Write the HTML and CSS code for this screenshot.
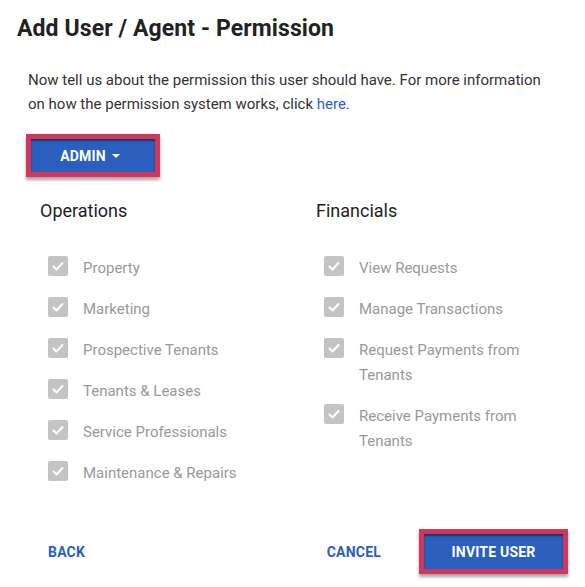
FILE: index.html
```html
<!DOCTYPE html>
<html>
<head>
<meta charset="utf-8">
<link rel="stylesheet" href="styles.css">
</head>
<body>
<div class="modal">
  <h1 class="title">Add User / Agent - Permission</h1>
  <div class="body">
    <p class="intro">Now tell us about the permission this user should have. For more information on how the permission system works, click <a class="link" href="#">here</a>.</p>
    <div class="role-wrap">
      <span class="highlight">
        <button class="btn-primary btn-role">ADMIN <span class="caret"></span></button>
      </span>
    </div>
    <div class="columns">
      <div class="col">
        <h2 class="col-title">Operations</h2>
        <ul class="perm-list">
          <li class="perm"><span class="check"><svg viewBox="0 0 20 20"><path d="M5.5 10.5l3 3 6-6.5" /></svg></span><span class="label">Property</span></li>
          <li class="perm"><span class="check"><svg viewBox="0 0 20 20"><path d="M5.5 10.5l3 3 6-6.5" /></svg></span><span class="label">Marketing</span></li>
          <li class="perm"><span class="check"><svg viewBox="0 0 20 20"><path d="M5.5 10.5l3 3 6-6.5" /></svg></span><span class="label">Prospective Tenants</span></li>
          <li class="perm"><span class="check"><svg viewBox="0 0 20 20"><path d="M5.5 10.5l3 3 6-6.5" /></svg></span><span class="label">Tenants &amp; Leases</span></li>
          <li class="perm"><span class="check"><svg viewBox="0 0 20 20"><path d="M5.5 10.5l3 3 6-6.5" /></svg></span><span class="label">Service Professionals</span></li>
          <li class="perm"><span class="check"><svg viewBox="0 0 20 20"><path d="M5.5 10.5l3 3 6-6.5" /></svg></span><span class="label">Maintenance &amp; Repairs</span></li>
        </ul>
      </div>
      <div class="col">
        <h2 class="col-title">Financials</h2>
        <ul class="perm-list">
          <li class="perm"><span class="check"><svg viewBox="0 0 20 20"><path d="M5.5 10.5l3 3 6-6.5" /></svg></span><span class="label">View Requests</span></li>
          <li class="perm"><span class="check"><svg viewBox="0 0 20 20"><path d="M5.5 10.5l3 3 6-6.5" /></svg></span><span class="label">Manage Transactions</span></li>
          <li class="perm"><span class="check"><svg viewBox="0 0 20 20"><path d="M5.5 10.5l3 3 6-6.5" /></svg></span><span class="label">Request Payments from Tenants</span></li>
          <li class="perm"><span class="check"><svg viewBox="0 0 20 20"><path d="M5.5 10.5l3 3 6-6.5" /></svg></span><span class="label">Receive Payments from Tenants</span></li>
        </ul>
      </div>
    </div>
  </div>
  <div class="footer">
    <button class="btn-flat">BACK</button>
    <div class="footer-right">
      <button class="btn-flat">CANCEL</button>
      <span class="highlight">
        <button class="btn-primary btn-invite">INVITE USER</button>
      </span>
    </div>
  </div>
</div>
</body>
</html>
```

FILE: styles.css
```css
* { box-sizing: border-box; }
html, body { margin: 0; padding: 0; background: #fff; }
body {
  font-family: Roboto, "Noto Sans", sans-serif;
  color: #333;
  width: 585px;
  height: 587px;
  overflow: hidden;
}
.modal { padding: 15px 0 0; }
.title {
  margin: 0;
  padding: 0 17px;
  font-size: 23px;
  line-height: 28px;
  font-weight: 700;
  color: #222;
  letter-spacing: 0.1px;
}
.body { padding: 0 28px; }
.intro {
  margin: 25px 0 0;
  max-width: 522px;
  font-size: 15px;
  line-height: 24px;
  color: #333;
}
.link { color: #2a62c9; text-decoration: none; }
.role-wrap { margin: 18px 0 0 -2px; display: flex; }
.highlight {
  display: inline-flex;
  border: 5px solid #d3365c;
  box-shadow: 0 3px 3px rgba(0,0,0,0.35);
}
.btn-primary {
  border: 0;
  margin: 0;
  background: #2a5fbd;
  color: #fff;
  font-family: inherit;
  font-weight: 700;
  font-size: 14px;
  letter-spacing: 0.2px;
  box-shadow: inset 0 2px 2px rgba(0,0,0,0.45);
  display: flex;
  align-items: center;
  justify-content: center;
  gap: 6px;
}
.btn-role { width: 124px; height: 33px; padding: 0 6px 0 0; }
.caret {
  width: 0; height: 0;
  border-left: 4px solid transparent;
  border-right: 4px solid transparent;
  border-top: 4px solid #fff;
  margin-top: 1px;
}
.columns {
  display: grid;
  grid-template-columns: 276px 1fr;
  margin: 22px 0 0 12px;
}
.col-title {
  margin: 0;
  font-size: 18px;
  line-height: 24px;
  font-weight: 400;
  color: #222;
}
.perm-list { list-style: none; margin: 33px 0 0; padding: 0 0 0 8px; }
.perm {
  display: flex;
  align-items: flex-start;
  gap: 15px;
  margin-bottom: 16px;
  font-size: 15px;
  line-height: 25px;
  color: #999;
}
.label { max-width: 180px; }
.check {
  flex: none;
  width: 20px;
  height: 20px;
  border-radius: 2px;
  background: #c4c4c4;
  display: flex;
}
.check svg { width: 20px; height: 20px; fill: none; stroke: #fff; stroke-width: 2; stroke-linecap: round; stroke-linejoin: round; }
.footer {
  display: flex;
  justify-content: space-between;
  align-items: center;
  padding: 0 17px 0 48px;
  margin-top: 27px;
}
.footer-right { display: flex; align-items: center; gap: 38px; }
.btn-flat {
  border: 0;
  background: none;
  padding: 0;
  font-family: inherit;
  font-weight: 700;
  font-size: 14px;
  color: #2a5fbd;
  letter-spacing: 0.2px;
}
.btn-invite { width: 139px; height: 35px; }
```
